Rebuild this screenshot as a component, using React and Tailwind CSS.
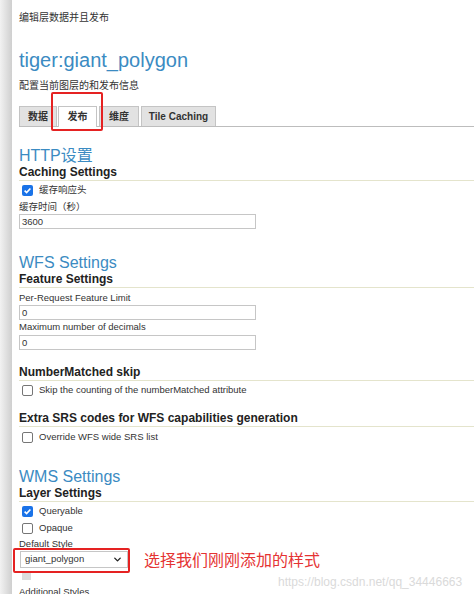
import { ChevronDown } from "lucide-react";

const font = { fontFamily: '"Liberation Sans", "Noto Sans CJK SC", sans-serif' };

function Check({ on }) {
  return on ? (
    <span className="w-[11px] h-[11px] rounded-[2px] bg-[#1a73e8] flex items-center justify-center shrink-0">
      <svg width="9" height="9" viewBox="0 0 10 10">
        <path d="M1.8 5.2l2.2 2.2 4.2-4.6" fill="none" stroke="white" strokeWidth="1.8" />
      </svg>
    </span>
  ) : (
    <span className="w-[11px] h-[11px] rounded-[2px] border border-[#767676] bg-white shrink-0" />
  );
}

function CheckRow({ on, label, className = "" }) {
  return (
    <div className={`flex items-center gap-[6px] pl-[3px] h-[14px] text-[9.5px] text-[#333] ${className}`}>
      <Check on={on} />
      <span>{label}</span>
    </div>
  );
}

function Label({ children, className = "" }) {
  return <div className={`text-[9.5px] leading-[13px] text-[#333] ${className}`}>{children}</div>;
}

function Section({ children, className = "" }) {
  return <h2 className={`text-[16px] leading-[16px] text-[#3b8bc2] ${className}`}>{children}</h2>;
}

function Sub({ children, className = "" }) {
  return (
    <h3 className={`font-bold text-[12px] leading-[16px] text-[#222] border-b border-[#e4e4cc] ${className}`}>
      {children}
    </h3>
  );
}

function Input({ value, className = "" }) {
  return (
    <div className={`w-[237px] h-[15px] border border-[#c6c6c6] bg-white text-[9.5px] leading-[13px] pl-[2px] text-[#333] ${className}`}>
      {value}
    </div>
  );
}

export default function App() {
  return (
    <div className="w-[474px] h-[594px] overflow-hidden bg-white flex relative" style={font}>
      <div className="w-[12px] shrink-0 bg-gradient-to-r from-[#f2f2f2] to-[#cfcfcf]" />
      <div className="flex-1 pl-[7px] text-[#333]">
        <div className="pt-[11px] text-[10px] leading-[14px]">编辑层数据并且发布</div>
        <h1 className="mt-[23px] text-[20px] leading-[24px] text-[#3b8bc2]">tiger:giant_polygon</h1>
        <div className="mt-[7px] text-[10px] leading-[14px]">配置当前图层的和发布信息</div>

        <div className="relative mt-[13px] flex items-end h-[21px] border-b border-[#bdbdbd]">
          <div className="w-[38px] h-[20px] mr-[1px] bg-[#e2e2e2] border border-b-0 border-[#c4c4c4] text-[10px] font-bold leading-[19px] text-center">数据</div>
          <div className="w-[39px] h-[21px] -mb-[1px] mr-[2px] bg-white border border-b-0 border-[#c4c4c4] text-[10px] font-bold leading-[20px] text-center">发布</div>
          <div className="w-[40px] h-[20px] mr-[2px] bg-[#e2e2e2] border border-b-0 border-[#c4c4c4] text-[10px] font-bold leading-[19px] text-center">维度</div>
          <div className="w-[75px] h-[20px] bg-[#e2e2e2] border border-b-0 border-[#c4c4c4] text-[10px] font-bold leading-[19px] text-center">Tile Caching</div>
          <div className="absolute left-[32px] top-[-14px] w-[52px] h-[39px] border-2 border-[#e52222] rounded-[2px]" />
        </div>

        <Section className="mt-[21px]">HTTP设置</Section>
        <Sub>Caching Settings</Sub>
        <CheckRow on label="缓存响应头" className="mt-[2px]" />
        <Label className="mt-[3px]">缓存时间（秒）</Label>
        <Input value="3600" className="mt-[1px]" />

        <Section className="mt-[26px]">WFS Settings</Section>
        <Sub>Feature Settings</Sub>
        <Label className="mt-[3px]">Per-Request Feature Limit</Label>
        <Input value="0" className="mt-[1px]" />
        <Label>Maximum number of decimals</Label>
        <Input value="0" className="mt-[2px]" />

        <Sub className="mt-[14px]">NumberMatched skip</Sub>
        <CheckRow label="Skip the counting of the numberMatched attribute" className="mt-[2px]" />
        <Sub className="mt-[13px]">Extra SRS codes for WFS capabilities generation</Sub>
        <CheckRow label="Override WFS wide SRS list" className="mt-[3px]" />

        <Section className="mt-[25px]">WMS Settings</Section>
        <Sub>Layer Settings</Sub>
        <CheckRow on label="Queryable" className="mt-[2px]" />
        <CheckRow label="Opaque" className="mt-[3px]" />
        <Label className="mt-[2px]">Default Style</Label>

        <div className="flex items-center -mt-[2px]">
          <div className="-ml-[6px] w-[117px] h-[25px] border-2 border-[#e52222] rounded-[2px] pl-[5px] pt-[1px]">
            <div className="w-[108px] h-[17px] border border-[#c6c6c6] bg-white flex items-center justify-between px-[4px] text-[9.5px]">
              <span>giant_polygon</span>
              <ChevronDown size={11} strokeWidth={3} className="text-[#222]" />
            </div>
          </div>
          <span className="ml-[14px] text-[16px] leading-[20px] text-[#e53333]">选择我们刚刚添加的样式</span>
        </div>
        <div className="ml-[3px] -mt-[2px] w-[9px] h-[9px] bg-[#dcdcdc]" />
        <Label className="mt-[5px]">Additional Styles</Label>
      </div>
      <div className="absolute left-[278px] top-[575px] text-[12px] leading-[14px] text-[#dadada]">
        https://blog.csdn.net/qq_34446663
      </div>
    </div>
  );
}
